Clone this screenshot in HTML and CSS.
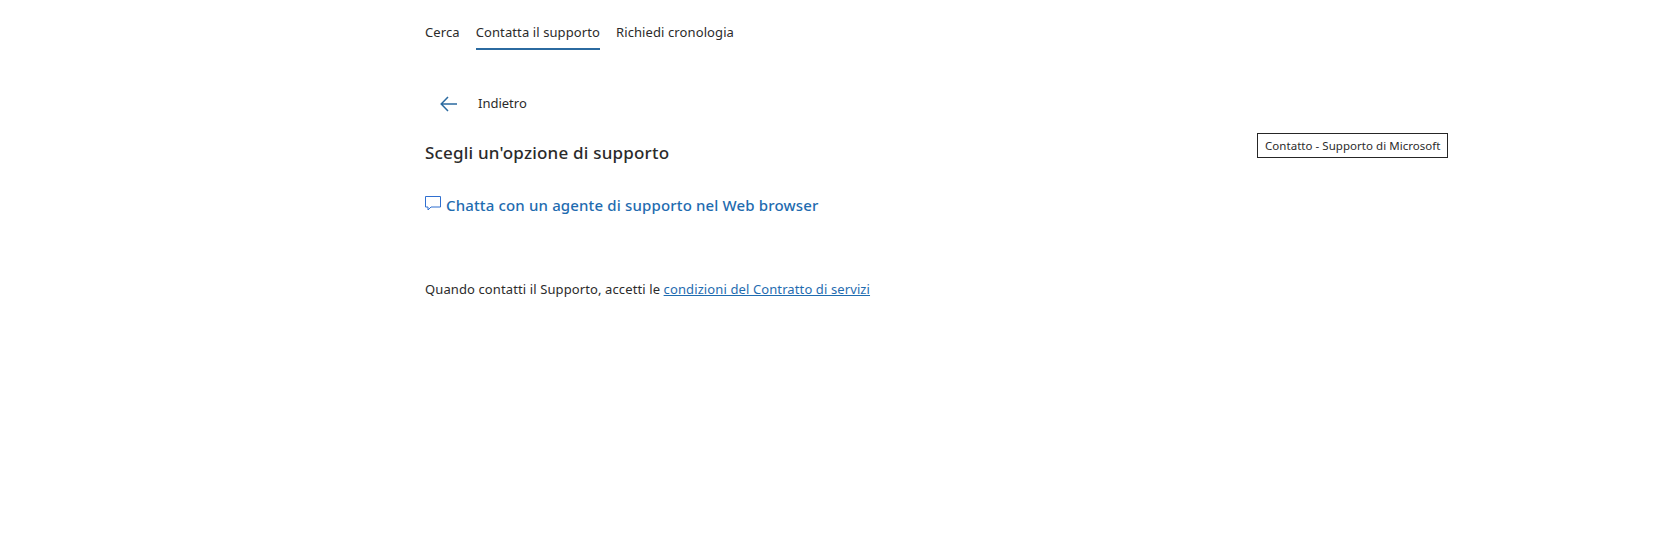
FILE: index.html
```html
<!DOCTYPE html>
<html lang="it">
<head>
<meta charset="utf-8">
<title>Contatto - Supporto di Microsoft</title>
<link rel="stylesheet" href="styles.css">
</head>
<body>
<main class="page">
  <nav class="tabs">
    <a class="tab">Cerca</a>
    <a class="tab tab-active">Contatta il supporto</a>
    <a class="tab">Richiedi cronologia</a>
  </nav>
  <div class="back">
    <svg class="back-icon" width="18" height="16" viewBox="0 0 18 16" aria-hidden="true"><path d="M8 1 1.200 8 8 15M1.200 8H17" fill="none" stroke="#2b6aa0" stroke-width="1.500"/></svg>
    <span>Indietro</span>
  </div>
  <h1 class="title">Scegli un'opzione di supporto</h1>
  <a class="chat">
    <svg class="chat-icon" width="16" height="15" viewBox="0 0 16 15" aria-hidden="true"><path d="M.5.5h15v10.500H6L3 14v-3H.5z" fill="none" stroke="#2f6fd0" stroke-width="1"/></svg>
    <span>Chatta con un agente di supporto nel Web browser</span>
  </a>
  <p class="terms">Quando contatti il Supporto, accetti le <a class="terms-link">condizioni del Contratto di servizi</a></p>
</main>
<div class="tooltip">Contatto - Supporto di Microsoft</div>
</body>
</html>
```
FILE: styles.css
```css
* { box-sizing: border-box; }
html, body { margin: 0; height: 100%; background: #fff; }
body {
  font-family: "Noto Sans", "Open Sans", sans-serif;
  color: #2b2b2b;
  font-size: 13px;
  overflow: hidden;
}
.page { padding: 20px 0 0 425px; }
.tabs { display: flex; gap: 16px; height: 30px; letter-spacing: .1px; }
.tab { display: block; height: 30px; line-height: 24px; white-space: nowrap; }
.tab-active { border-bottom: 2px solid #2b6aa0; }
.back { display: flex; align-items: center; margin-top: 38px; height: 30px; padding-left: 15px; gap: 20px; }
.back-icon { display: block; margin-top: 2px; }
.title { margin: 23px 0 0; font-size: 17px; line-height: 24px; font-weight: 500; letter-spacing: .2px; }
.chat { display: flex; align-items: flex-start; margin-top: 28px; color: #1f6cb0; font-size: 15px; font-weight: 500; line-height: 24px; gap: 5px; letter-spacing: .15px; }
.chat-icon { display: block; margin-top: 3px; }
.terms { margin: 62px 0 0; line-height: 20px; letter-spacing: .11px; }
.terms-link { color: #1f6cb0; text-decoration: underline; }
.tooltip { position: absolute; left: 1257px; top: 133px; width: 191px; height: 25px; border: 1px solid #262626; font-size: 11.5px; line-height: 24px; padding-left: 7px; background: #fff; white-space: nowrap; letter-spacing: .04px; }
```
